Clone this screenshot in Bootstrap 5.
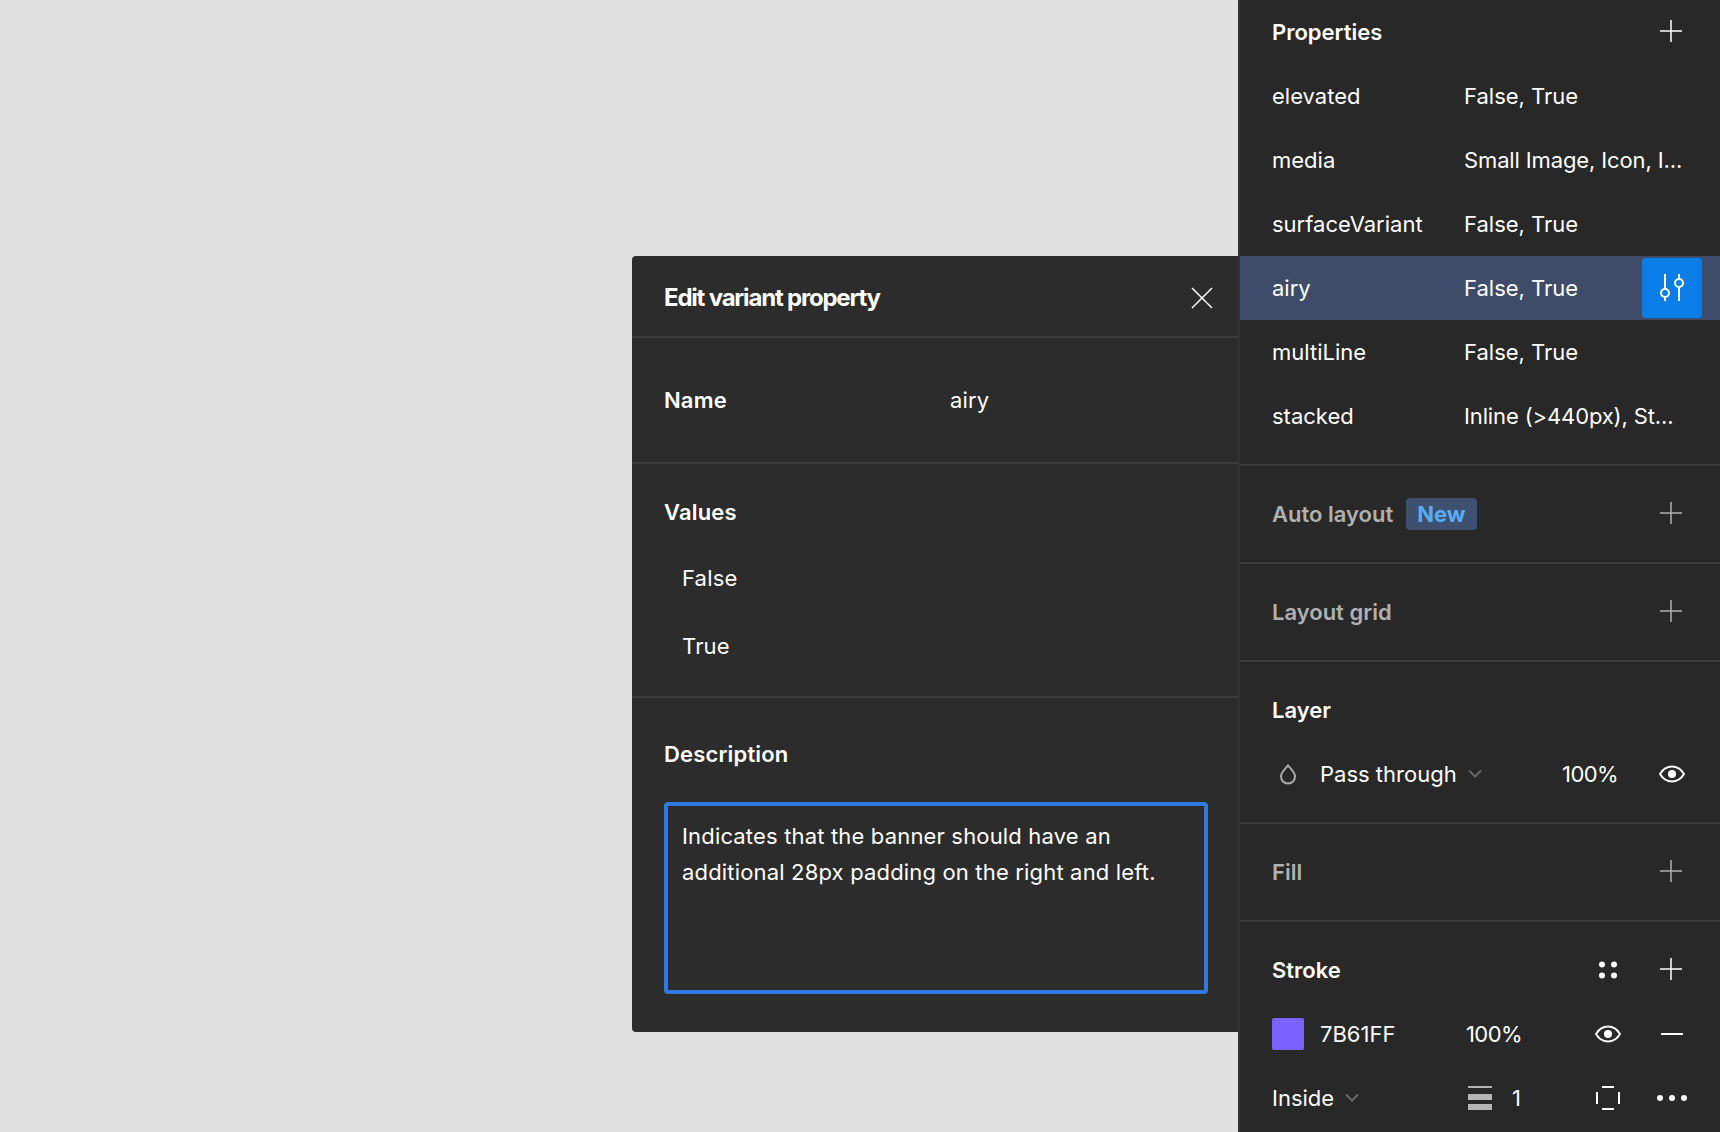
<!doctype html>
<html lang="en">
<head>
<meta charset="utf-8">
<title>Edit variant property</title>
<link href="https://cdn.jsdelivr.net/npm/bootstrap@5.3.0/dist/css/bootstrap.min.css" rel="stylesheet">
<style>
html,body{height:1132px;overflow:hidden}
body{background:#e0e0e0;color:#fff;font-family:Inter,"Liberation Sans",sans-serif;font-size:22px;line-height:32px}
.fg-canvas{height:1132px;padding-top:256px}
.fg-dialog{width:606px;height:776px;background:#2c2c2c;border-radius:4px 0 0 4px;letter-spacing:.17px}
.fg-dhead{height:82px;padding:4px 25px 0 32px;border-bottom:2px solid #3c3c3c}
.fg-title{font-weight:700;font-size:24px;letter-spacing:-.05em}
.fg-strong{font-weight:600}
.fg-dname{height:126px;padding-left:32px;border-bottom:2px solid #3c3c3c}
.fg-dname>.fg-strong{width:286px}
.fg-dvals{height:234px;padding:32px 32px 0;border-bottom:2px solid #3c3c3c}
.fg-dvals .fg-val{margin:34px 0 0 18px}
.fg-dvals .fg-val+.fg-val{margin-top:36px}
.fg-ddesc{padding:40px 32px 0}
.fg-area{display:block;width:544px;height:192px;margin-top:32px;padding:12px 14px;background:#2c2c2c;color:#fff;border:4px solid #2f7ae0;border-radius:4px;font:22px/36px Inter,"Liberation Sans",sans-serif;letter-spacing:.17px;resize:none;overflow:hidden;outline:0}
.fg-panel{width:482px;height:1132px;background:#282828;border-left:2px solid #333;flex:none}
.fg-sec{padding:16px 0;border-bottom:2px solid #3a3a3a}
.fg-sec.fg-top{padding-top:0}
.fg-row{height:64px;padding:0 18px 0 32px}
.fg-row.fg-sel{background:#3e4c6a}
.fg-key{width:192px;flex:none}
.fg-muted{color:#b0b0b0}
.fg-pill{background:#3f4f70;color:#55aef5;font-weight:700;border-radius:4px;height:32px;line-height:32px;padding:0 12px 0 11px;margin-left:13px}
.fg-ic{display:block;flex:none}
.fg-add{margin:0 20px 2px 0}
.fg-tune{width:60px;height:60px;padding:0;border:0;border-radius:3px;background:#0a7de8}
.fg-tune:hover{background:#0a7de8}
.fg-swatch{width:32px;height:32px;background:#7b61ff;border-radius:2px;margin-right:16px;flex:none}
.fg-w128{width:146px;flex:none}
.fg-shut{background:none;border:0;padding:0;line-height:0}
.fg-chev{margin-left:11px}
.fg-cut{letter-spacing:-.13px}
.fg-pct{letter-spacing:-.6px}
</style>
</head>
<body>
<div class="d-flex">
  <div class="fg-canvas flex-grow-1 d-flex justify-content-end">
    <div class="fg-dialog">
      <div class="fg-dhead d-flex align-items-center justify-content-between">
        <span class="fg-title">Edit variant property</span>
        <button class="fg-shut" type="button" aria-label="Close">
          <svg class="fg-ic" width="22" height="22" viewBox="0 0 22 22"><path d="M1 1l20 20M21 1L1 21" stroke="#fff" stroke-width="1.5" fill="none"/></svg>
        </button>
      </div>
      <div class="fg-dname d-flex align-items-center">
        <span class="fg-strong">Name</span><span>airy</span>
      </div>
      <div class="fg-dvals">
        <div class="fg-strong">Values</div>
        <div class="fg-val">False</div>
        <div class="fg-val">True</div>
      </div>
      <div class="fg-ddesc">
        <div class="fg-strong">Description</div>
        <textarea class="fg-area" spellcheck="false">Indicates that the banner should have an
additional 28px padding on the right and left.</textarea>
      </div>
    </div>
  </div>
  <div class="fg-panel">
    <div class="fg-sec fg-top">
      <div class="fg-row d-flex align-items-center justify-content-between">
        <span class="fg-strong">Properties</span>
        <svg class="fg-ic fg-add" width="22" height="22" viewBox="0 0 22 22"><path d="M11 0v22M0 11h22" stroke="#fff" stroke-width="1.5"/></svg>
      </div>
      <div class="fg-row d-flex align-items-center"><span class="fg-key">elevated</span><span>False, True</span></div>
      <div class="fg-row d-flex align-items-center"><span class="fg-key">media</span><span class="fg-cut">Small Image, Icon, I...</span></div>
      <div class="fg-row d-flex align-items-center"><span class="fg-key">surfaceVariant</span><span>False, True</span></div>
      <div class="fg-row fg-sel d-flex align-items-center">
        <span class="fg-key">airy</span><span class="flex-grow-1">False, True</span>
        <button class="btn fg-tune" type="button" aria-label="Edit property">
          <svg class="fg-ic" width="60" height="60" viewBox="0 0 60 60" fill="none" stroke="#fff" stroke-width="2"><path d="M23 16v15M23 39v4M37 16v5M37 29v14"/><circle cx="23" cy="35" r="4"/><circle cx="37" cy="25" r="4"/></svg>
        </button>
      </div>
      <div class="fg-row d-flex align-items-center"><span class="fg-key">multiLine</span><span>False, True</span></div>
      <div class="fg-row d-flex align-items-center"><span class="fg-key">stacked</span><span class="fg-cut">Inline (&gt;440px), St...</span></div>
    </div>
    <div class="fg-sec">
      <div class="fg-row d-flex align-items-center">
        <span class="fg-strong fg-muted">Auto layout</span><span class="fg-pill">New</span>
        <svg class="fg-ic fg-add ms-auto" width="22" height="22" viewBox="0 0 22 22"><path d="M11 0v22M0 11h22" stroke="#b0b0b0" stroke-width="1.5"/></svg>
      </div>
    </div>
    <div class="fg-sec">
      <div class="fg-row d-flex align-items-center justify-content-between">
        <span class="fg-strong fg-muted">Layout grid</span>
        <svg class="fg-ic fg-add" width="22" height="22" viewBox="0 0 22 22"><path d="M11 0v22M0 11h22" stroke="#b0b0b0" stroke-width="1.5"/></svg>
      </div>
    </div>
    <div class="fg-sec">
      <div class="fg-row d-flex align-items-center"><span class="fg-strong">Layer</span></div>
      <div class="fg-row d-flex align-items-center">
        <svg class="fg-ic" width="48" height="22" viewBox="0 0 48 22" fill="none"><path d="M16 2.5c3.5 4 7 6.800 7 11a7 7 0 0 1-14 0c0-4.200 3.500-7 7-11z" stroke="#aaa" stroke-width="2"/></svg>
        <span>Pass through</span>
        <svg class="fg-ic fg-chev" width="14" height="10" viewBox="0 0 14 10" fill="none"><path d="M1 1.500l6 6 6-6" stroke="#666" stroke-width="2"/></svg>
        <span class="ms-auto fg-pct">100%</span>
        <svg class="fg-ic" style="margin:0 17px 0 41px" width="26" height="18" viewBox="0 0 26 18" fill="none"><path d="M1 9c3-5 7.500-7.500 12-7.500S22 4 25 9c-3 5-7.500 7.500-12 7.500S4 14 1 9z" stroke="#fff" stroke-width="2"/><circle cx="13" cy="9" r="4" fill="#fff"/></svg>
      </div>
    </div>
    <div class="fg-sec">
      <div class="fg-row d-flex align-items-center justify-content-between">
        <span class="fg-strong fg-muted">Fill</span>
        <svg class="fg-ic fg-add" width="22" height="22" viewBox="0 0 22 22"><path d="M11 0v22M0 11h22" stroke="#b0b0b0" stroke-width="1.5"/></svg>
      </div>
    </div>
    <div>
      <div class="fg-row d-flex align-items-center" style="margin-top:16px">
        <span class="fg-strong">Stroke</span>
        <svg class="fg-ic ms-auto" style="margin-right:43px" width="18" height="18" viewBox="0 0 18 18" fill="#fff"><circle cx="3" cy="3.500" r="3"/><circle cx="15" cy="3.500" r="3"/><circle cx="3" cy="14.500" r="3"/><circle cx="15" cy="14.500" r="3"/></svg>
        <svg class="fg-ic fg-add" width="22" height="22" viewBox="0 0 22 22"><path d="M11 0v22M0 11h22" stroke="#fff" stroke-width="1.5"/></svg>
      </div>
      <div class="fg-row d-flex align-items-center">
        <span class="fg-swatch"></span>
        <span class="fg-w128">7B61FF</span>
        <span class="fg-pct">100%</span>
        <svg class="fg-ic ms-auto" style="margin-right:40px" width="26" height="18" viewBox="0 0 26 18" fill="none"><path d="M1 9c3-5 7.500-7.500 12-7.500S22 4 25 9c-3 5-7.500 7.500-12 7.500S4 14 1 9z" stroke="#fff" stroke-width="2"/><circle cx="13" cy="9" r="4" fill="#fff"/></svg>
        <svg class="fg-ic" style="margin-right:19px" width="22" height="4" viewBox="0 0 22 4"><path d="M0 2h22" stroke="#fff" stroke-width="2"/></svg>
      </div>
      <div class="fg-row d-flex align-items-center">
        <span class="fg-key d-flex align-items-center">Inside
          <svg class="fg-ic fg-chev" width="14" height="10" viewBox="0 0 14 10" fill="none"><path d="M1 1.500l6 6 6-6" stroke="#666" stroke-width="2"/></svg>
        </span>
        <svg class="fg-ic" style="margin:0 20px 0 4px" width="24" height="24" viewBox="0 0 24 24" fill="#b4b4b4"><rect width="24" height="2"/><rect y="8" width="24" height="6"/><rect y="18" width="24" height="6"/></svg>
        <span>1</span>
        <svg class="fg-ic ms-auto" style="margin-right:37px" width="24" height="24" viewBox="0 0 24 24" fill="none" stroke="#fff" stroke-width="2"><path d="M6 1h12M6 23h12M1 6v12M23 6v12"/></svg>
        <svg class="fg-ic" style="margin-right:15px" width="30" height="6" viewBox="0 0 30 6" fill="#fff"><circle cx="3" cy="3" r="3"/><circle cx="15" cy="3" r="3"/><circle cx="27" cy="3" r="3"/></svg>
      </div>
    </div>
  </div>
</div>
<script src="https://cdn.jsdelivr.net/npm/bootstrap@5.3.0/dist/js/bootstrap.bundle.min.js"></script>
</body>
</html>
